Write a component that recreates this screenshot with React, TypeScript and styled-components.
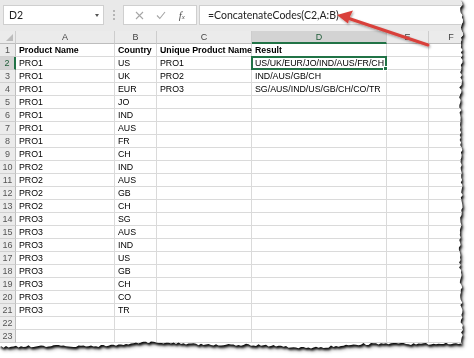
import React from "react";
import styled, { createGlobalStyle } from "styled-components";

const GlobalStyle = createGlobalStyle`
  html, body { margin: 0; padding: 0; background: #ffffff; }
  body { font-family: Lato, "Open Sans", sans-serif; }
  * { box-sizing: border-box; }
`;

const UI_FONT = `Lato, "Open Sans", "Liberation Sans", sans-serif`;
const CELL_FONT = `"Liberation Sans", Arial, sans-serif`;
const GREEN = "#217346";
const COLS = [16, 99, 42, 95, 135, 42, 45];

const Page = styled.div`
  position: relative;
  width: 474px;
  height: 358px;
  background: #ffffff;
  overflow: hidden;
`;

const ShadowWrap = styled.div`
  width: 474px;
  height: 358px;
  filter: drop-shadow(1px 2px 0.8px rgba(0, 0, 0, 0.95)) drop-shadow(1px 1px 1.5px rgba(0, 0, 0, 0.45));
`;

const Sheet = styled.div`
  width: 474px;
  height: 358px;
  background: #ffffff;
  display: flex;
  flex-direction: column;
  font-family: ${UI_FONT};
`;

const TopBar = styled.div`
  height: 31px;
  flex: none;
  display: flex;
  align-items: stretch;
  padding: 5px 0 6px 3px;
  background: #e9e9e9;
`;

const Box = styled.div`
  background: #ffffff;
  border: 1px solid #cfcfcf;
  display: flex;
  align-items: center;
`;

const NameBox = styled(Box)`
  width: 101px;
  justify-content: space-between;
  padding: 0 4px 0 5px;
  font-size: 10.5px;
  color: #222;
`;

const Caret = styled.span`
  width: 0;
  height: 0;
  border-left: 2.5px solid transparent;
  border-right: 2.5px solid transparent;
  border-top: 3px solid #555;
`;

const Separator = styled.div`
  width: 19px;
  display: flex;
  flex-direction: column;
  align-items: center;
  justify-content: center;
  gap: 2px;
`;

const Dot = styled.span`
  width: 2px;
  height: 2px;
  background: #b5b5b5;
`;

const IconBox = styled(Box)`
  width: 74px;
  justify-content: space-around;
  padding: 0 5px;
  color: #9a9a9a;
`;

const Fx = styled.span`
  font-family: "Liberation Serif", serif;
  font-style: italic;
  font-size: 11px;
  color: #555;
  & sub {
    font-size: 7px;
    vertical-align: baseline;
  }
`;

const FormulaBox = styled(Box)`
  flex: 1;
  margin-left: 2px;
  padding-left: 8px;
  font-size: 10.5px;
  color: #222;
`;

const Grid = styled.div`
  display: grid;
  grid-template-columns: ${COLS.map((c) => c + "px").join(" ")};
  grid-auto-rows: 13px;
`;

const HeadCell = styled.div<{ $sel?: boolean }>`
  position: relative;
  background: ${(p) => (p.$sel ? "#d3d3d3" : "#ebebeb")};
  border-right: 1px solid #cdcdcd;
  border-bottom: ${(p) => (p.$sel ? `2px solid ${GREEN}` : "1px solid #bdbdbd")};
  font-family: ${CELL_FONT};
  font-size: 9px;
  line-height: 12px;
  color: ${(p) => (p.$sel ? "#1f5c38" : "#444")};
  text-align: center;
  overflow: hidden;
`;

const CornerMark = styled.span`
  position: absolute;
  right: 2px;
  bottom: 2px;
  width: 0;
  height: 0;
  border-left: 7px solid transparent;
  border-bottom: 7px solid #bcbcbc;
`;

const RowHead = styled.div<{ $sel?: boolean }>`
  background: ${(p) => (p.$sel ? "#d3d3d3" : "#ebebeb")};
  border-right: ${(p) => (p.$sel ? `2px solid ${GREEN}` : "1px solid #bdbdbd")};
  border-bottom: 1px solid #d0d0d0;
  font-family: ${CELL_FONT};
  font-size: 9px;
  line-height: 13px;
  color: ${(p) => (p.$sel ? "#1f5c38" : "#555")};
  text-align: center;
`;

const Cell = styled.div<{ $bold?: boolean; $active?: boolean }>`
  position: relative;
  border-right: 1px solid #dadada;
  border-bottom: 1px solid #dadada;
  padding-left: 3px;
  font-family: ${CELL_FONT};
  font-size: 8.8px;
  line-height: 13px;
  font-weight: ${(p) => (p.$bold ? 700 : 400)};
  color: #000;
  white-space: nowrap;
  overflow: visible;
  z-index: ${(p) => (p.$active ? 2 : 1)};
`;

const ActiveFrame = styled.span`
  position: absolute;
  left: -1px;
  top: -1px;
  right: -1px;
  bottom: -1px;
  border: 2px solid ${GREEN};
  pointer-events: none;
`;

const FillHandle = styled.span`
  position: absolute;
  right: -3px;
  bottom: -3px;
  width: 5px;
  height: 5px;
  background: ${GREEN};
  border: 1px solid #ffffff;
`;

const ArrowSvg = styled.svg`
  position: absolute;
  left: 0;
  top: 0;
  pointer-events: none;
`;

const HEADERS = ["A", "B", "C", "D", "E", "F"];

const countries = [
  "US", "UK", "EUR", "JO", "IND", "AUS", "FR", "CH",
  "IND", "AUS", "GB", "CH",
  "SG", "AUS", "IND", "US", "GB", "CH", "CO", "TR",
];
const products = countries.map((_, i) => (i < 8 ? "PRO1" : i < 12 ? "PRO2" : "PRO3"));
const uniques = ["PRO1", "PRO2", "PRO3"];
const results = [
  "US/UK/EUR/JO/IND/AUS/FR/CH",
  "IND/AUS/GB/CH",
  "SG/AUS/IND/US/GB/CH/CO/TR",
];

type Row = string[];
const rows: Row[] = [["Product Name", "Country", "Unique Product Name", "Result", "", ""]];
for (let i = 0; i < 22; i++) {
  if (i < 20) {
    rows.push([products[i], countries[i], uniques[i] || "", results[i] || "", "", ""]);
  } else {
    rows.push(["", "", "", "", "", ""]);
  }
}

function makeRng(seed: number) {
  let s = seed;
  return () => {
    s = (s * 16807) % 2147483647;
    return (s - 1) / 2147483646;
  };
}

function tornClip(): string {
  const r = makeRng(12345);
  const pts: string[] = ["0px 0px"];
  const edgeX = 461;
  const edgeY = 345;
  for (let y = 0; y <= edgeY; y += 2.5) {
    const x = edgeX + Math.sin(y / 23) * 0.9 + (r() - 0.5) * 2.6;
    pts.push(`${x.toFixed(1)}px ${y.toFixed(1)}px`);
  }
  for (let x = edgeX; x >= 0; x -= 2.5) {
    const y =
      edgeY +
      Math.sin(x / 41 + 0.6) * 1.8 +
      Math.sin(x / 17 + 2) * 0.9 +
      (r() - 0.5) * 2.2;
    pts.push(`${x.toFixed(1)}px ${y.toFixed(1)}px`);
  }
  pts.push("0px 347px");
  return `polygon(${pts.join(", ")})`;
}

export default function App() {
  const clip = React.useMemo(tornClip, []);
  return (
    <>
      <GlobalStyle />
      <Page>
        <ShadowWrap>
          <Sheet style={{ clipPath: clip }}>
            <TopBar>
              <NameBox>
                <span>D2</span>
                <Caret />
              </NameBox>
              <Separator>
                <Dot />
                <Dot />
                <Dot />
              </Separator>
              <IconBox>
                <svg width="9" height="9" viewBox="0 0 9 9">
                  <path d="M1 1 L8 8 M8 1 L1 8" stroke="#a6a6a6" strokeWidth="1.1" fill="none" />
                </svg>
                <svg width="10" height="9" viewBox="0 0 10 9">
                  <path d="M1 4.5 L3.8 7.5 L9 1" stroke="#a6a6a6" strokeWidth="1.1" fill="none" />
                </svg>
                <Fx>
                  f<sub>x</sub>
                </Fx>
              </IconBox>
              <FormulaBox>=ConcatenateCodes(C2,A:B)</FormulaBox>
            </TopBar>
            <Grid>
              <HeadCell>
                <CornerMark />
              </HeadCell>
              {HEADERS.map((h) => (
                <HeadCell key={h} $sel={h === "D"}>
                  {h}
                </HeadCell>
              ))}
              {rows.map((row, ri) => (
                <React.Fragment key={ri}>
                  <RowHead $sel={ri === 1}>{ri + 1}</RowHead>
                  {row.map((v, ci) => {
                    const active = ri === 1 && ci === 3;
                    return (
                      <Cell key={ci} $bold={ri === 0} $active={active}>
                        {v}
                        {active && (
                          <ActiveFrame>
                            <FillHandle />
                          </ActiveFrame>
                        )}
                      </Cell>
                    );
                  })}
                </React.Fragment>
              ))}
            </Grid>
          </Sheet>
        </ShadowWrap>
        <ArrowSvg width="474" height="358" viewBox="0 0 474 358">
          <defs>
            <filter id="ash" x="-10%" y="-30%" width="120%" height="160%">
              <feDropShadow dx="1" dy="1.5" stdDeviation="0.8" floodColor="#000" floodOpacity="0.35" />
            </filter>
          </defs>
          <g filter="url(#ash)">
            <path d="M428 45 L349 18.5" stroke="#d9413a" strokeWidth="3" strokeLinecap="round" fill="none" />
            <path d="M337 15 L353 10.5 L349.5 17.5 L348 23.5 Z" fill="#d9413a" />
          </g>
        </ArrowSvg>
      </Page>
    </>
  );
}
